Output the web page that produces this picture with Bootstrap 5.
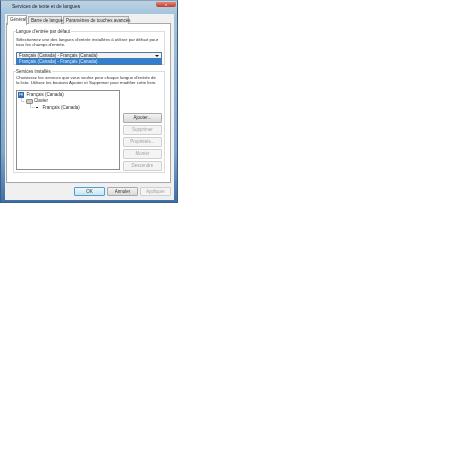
<!DOCTYPE html>
<html lang="fr">
<head>
<meta charset="utf-8">
<title>Services de texte et de langues</title>
<link href="https://cdn.jsdelivr.net/npm/bootstrap@5.3.0/dist/css/bootstrap.min.css" rel="stylesheet">
<style>
html,body{background:#fff;margin:0;padding:0}
body{font-family:"Liberation Sans",Arial,sans-serif;font-size:4.5px;line-height:5.2px;color:#333}
.dlg{width:178px;height:203px;padding:0 3px 3px 4px;background:linear-gradient(180deg,#bcd2e4 0,#a3c2dc 14px,#7ea6cc 150px,#3f6fa8 100%);border:1px solid #3d5f86;border-top-color:#8ba3b9;filter:blur(.35px)}
.ttl{height:13px;padding:0 0 2px 7px;font-size:4.9px;color:#222}
.closex{width:20px;height:5px;background:linear-gradient(180deg,#e08a78,#c23a2c);border-radius:0 0 2px 2px;margin:-5px -2px 0 0;color:#fff;font-size:4px;line-height:5px;text-align:center}
.body-area{background:#f0f0f0;height:186px;padding:1px 3px 0 1px}
.tabz{height:9px;padding-left:1px;gap:1px;margin-bottom:-1px;position:relative;z-index:1;white-space:nowrap}
.tabz a{display:block;height:9px;padding:1px 1px 0 2px;color:#333;text-decoration:none;border:1px solid #a8a8a8;border-bottom:0;background:#e6e6e6;line-height:6px}
.tabz a.on{background:#fff;height:10px;width:20px}
.tabz a.t2{width:34px;margin-top:1px;height:8px}
.tabz a.t3{width:66px;margin-top:1px;height:8px}
.pane{background:#fff;border:1px solid #a8a8a8;height:160px;width:165px;padding:7px 5px 0 6px}
.grp{border:1px solid #dcdcdc;padding:0 2px;position:relative}
.grp1{height:34px;padding-top:5px}
.grp2{height:102px;margin-top:6px;padding-top:3px}
.gl{position:absolute;top:-3px;left:2px;background:#fff;padding:0 1px 0 0;height:6px;line-height:6px;white-space:nowrap}
.desc{margin:0;white-space:nowrap;font-size:4.35px}
.cmb{height:6.5px;border:1px solid #4f78a8;line-height:5px;padding-left:2px;margin-top:4.6px;background:#f2f2f2;position:relative}
.cmb i{position:absolute;right:2px;top:1.5px;border-left:2px solid transparent;border-right:2px solid transparent;border-top:2px solid #111}
.drop{height:6px;background:#2f7fd0;color:#dbe9f7;line-height:5.5px;padding-left:2px;border:1px solid #4f78a8;border-top:0;position:relative;z-index:1}
.lay{gap:3px;margin-top:4.6px}
.tree{width:104px;height:80px;border:1px solid #8a8f96;padding:1px 0 0 1px;background:#fff;position:relative}
.r1,.r2,.r3{height:6.3px;white-space:nowrap;line-height:6.3px;display:flex;align-items:center}
.fr{width:6px;height:6px;background:#2c6bb3;color:#fff;font-size:3px;line-height:6px;text-align:center;margin-right:2.5px;display:inline-block}
.r2{padding-left:8px}
.r3{padding-left:18px}
.kbd{width:7px;height:5px;background:#c9c9c9;border:1px solid #8c8c8c;border-radius:1px;margin-right:1px;display:inline-block}
.bul{width:1.5px;height:1.5px;background:#222;display:inline-block;margin-right:5px}
.lines{position:absolute;left:0;top:0}
.side{width:39px;padding-top:23px;gap:2.6px}
.wb{display:block;height:9.5px;line-height:7.5px;text-align:center;border:1px solid #a9a9a9;border-radius:1px;background:linear-gradient(180deg,#f3f3f3,#d9d9d9);color:#333;padding:0}
.wb.dis{background:#f4f4f4;border-color:#cfcfcf;color:#a3a3a3}
.wb.ok{border-color:#4ea0cb;background:linear-gradient(180deg,#edf7fc,#c8e3f1)}
.foot{padding-top:3.5px}
.foot .wb{width:31px;margin-left:2px}
</style>
</head>
<body>
<div class="dlg">
  <div class="ttl d-flex justify-content-between align-items-center">
    <span>Services de texte et de langues</span>
    <span class="closex">x</span>
  </div>
  <div class="body-area">
    <div class="tabz d-flex">
      <a class="on" href="#">Général</a>
      <a class="t2" href="#">Barre de langue</a>
      <a class="t3" href="#">Paramètres de touches avancés</a>
    </div>
    <div class="pane">
      <div class="grp grp1">
        <span class="gl">Langue d'entrée par défaut</span>
        <p class="desc">Sélectionnez une des langues d'entrée installées à utiliser par défaut pour<br>tous les champs d'entrée.</p>
        <div class="cmb">Français (Canada) - Français (Canada)<i></i></div>
        <div class="drop">Français (Canada) - Français (Canada)</div>
      </div>
      <div class="grp grp2">
        <span class="gl">Services installés</span>
        <p class="desc">Choisissez les services que vous voulez pour chaque langue d'entrée de<br>la liste. Utilisez les boutons Ajouter et Supprimer pour modifier cette liste.</p>
        <div class="lay d-flex">
          <div class="tree">
            <svg class="lines" width="30" height="20" viewBox="0 0 30 20"><path d="M4.5 7V10.5H8M13.5 13V16.5H18" fill="none" stroke="#9a9a9a" stroke-width=".7" stroke-dasharray="1 .7"/></svg>
            <div class="r1"><span class="fr">FR</span>Français (Canada)</div>
            <div class="r2"><span class="kbd"></span>Clavier</div>
            <div class="r3"><span class="bul"></span>Français (Canada)</div>
          </div>
          <div class="side d-flex flex-column">
            <span class="wb">Ajouter...</span>
            <span class="wb dis">Supprimer</span>
            <span class="wb dis">Propriétés...</span>
            <span class="wb dis">Monter</span>
            <span class="wb dis">Descendre</span>
          </div>
        </div>
      </div>
    </div>
    <div class="foot d-flex justify-content-end">
      <span class="wb ok">OK</span>
      <span class="wb">Annuler</span>
      <span class="wb dis">Appliquer</span>
    </div>
  </div>
</div>
<script src="https://cdn.jsdelivr.net/npm/bootstrap@5.3.0/dist/js/bootstrap.bundle.min.js"></script>
</body>
</html>
